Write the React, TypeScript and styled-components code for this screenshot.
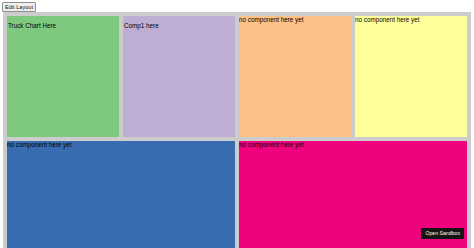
import React from 'react';
import styled, { createGlobalStyle } from 'styled-components';

const GlobalStyle = createGlobalStyle`
  body {
    margin: 0;
    background: #fff;
    font-family: "Liberation Sans", Arial, sans-serif;
    overflow: hidden;
  }
`;

const tiles = [
  { color: '#7fc97f', label: 'Truck Chart Here', span: 1, titled: true },
  { color: '#beaed4', label: 'Comp1 here', span: 1, titled: true },
  { color: '#fdc086', label: 'no component here yet', span: 1, titled: false },
  { color: '#ffff99', label: 'no component here yet', span: 1, titled: false },
  { color: '#386cb0', label: 'no component here yet', span: 2, titled: false },
  { color: '#f0027f', label: 'no component here yet', span: 2, titled: false },
];

export default function App() {
  return (
    <Page>
      <GlobalStyle />
      <EditButton>Edit Layout</EditButton>
      <Board>
        {tiles.map((t, i) => (
          <Tile key={i} $color={t.color} $span={t.span}>
            {t.titled ? <TileTitle>{t.label}</TileTitle> : <TileNote>{t.label}</TileNote>}
          </Tile>
        ))}
      </Board>
      <SandboxButton>Open Sandbox</SandboxButton>
    </Page>
  );
}

const Page = styled.div`
  padding-top: 2px;
  height: 248px;
  box-sizing: border-box;
  overflow: hidden;
`;

const EditButton = styled.button`
  display: block;
  margin-left: 2px;
  height: 10px;
  padding: 0 2px;
  font-family: "Liberation Sans", Arial, sans-serif;
  font-size: 5.6px;
  line-height: 8px;
  color: #111;
  background: #f0f0f0;
  border: 1px solid #8f8f8f;
  border-radius: 1px;
`;

const Board = styled.div`
  margin: 0 3px;
  padding: 4px;
  background: #cccccc;
  display: grid;
  grid-template-columns: repeat(4, 112px);
  grid-auto-rows: 121px;
  gap: 4px;
`;

const Tile = styled.div<{ $color: string; $span: number }>`
  background: ${(p) => p.$color};
  grid-column: span ${(p) => p.$span};
  color: #000;
  font-size: 6.3px;
  line-height: 7px;
  overflow: hidden;
`;

const TileTitle = styled.div`
  margin: 6px 0 0 1px;
`;

const TileNote = styled.div`
  margin: 0;
`;

const SandboxButton = styled.button`
  position: fixed;
  right: 10px;
  bottom: 9px;
  height: 11px;
  padding: 0 4px;
  border: none;
  border-radius: 1px;
  background: #151515;
  color: #fff;
  font-family: "Liberation Sans", Arial, sans-serif;
  font-size: 5.2px;
  line-height: 11px;
`;
